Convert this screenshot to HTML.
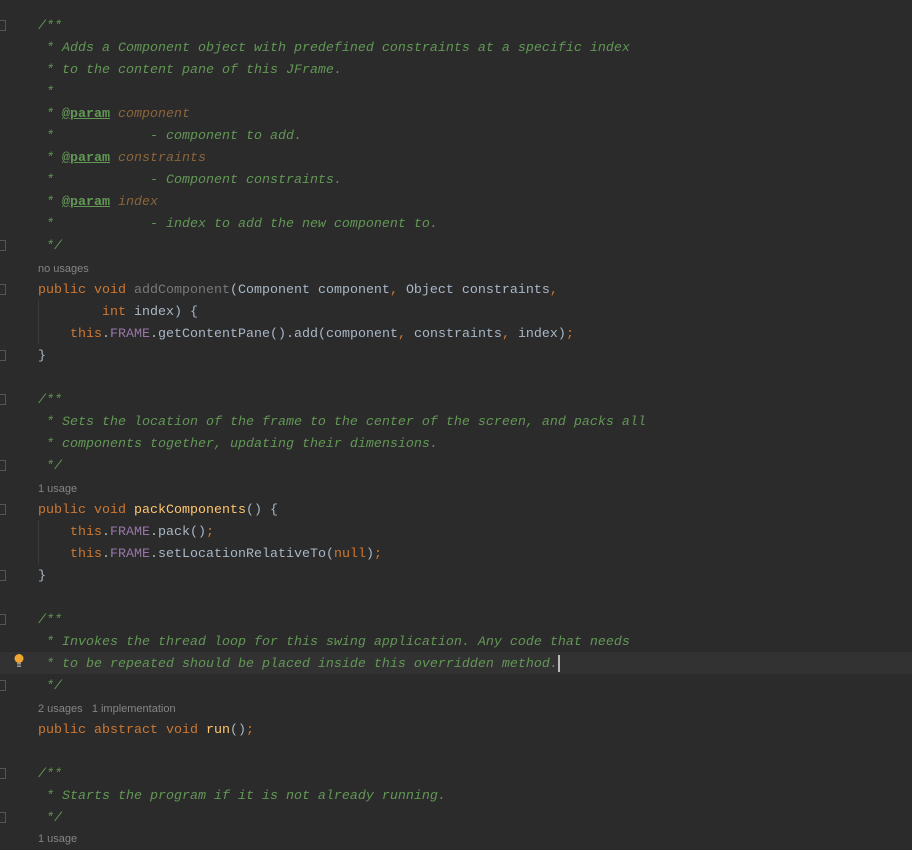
<!DOCTYPE html><html><head><style>
body{margin:0;width:912px;height:841px;background:#2b2b2b;overflow:hidden;position:relative;font-family:"Liberation Mono",monospace;font-size:13.33px}
.r{position:absolute;left:38px;height:22px;line-height:22px;white-space:pre;color:#a9b7c6;margin-top:2px}
.c{color:#629755;font-style:italic}
.t{color:#629755;font-style:normal;font-weight:bold;text-decoration:underline}
.p{color:#8a653b;font-style:italic}
.k{color:#cc7832}
.f{color:#9876aa}
.m{color:#ffc66d}
.u{color:#787878}
.h{position:absolute;left:38px;height:22px;line-height:22px;font-family:"Liberation Sans",sans-serif;font-size:11px;color:#858585;white-space:pre;margin-top:1px}
.fold{position:absolute;left:0;width:5px;height:9px;border:1px solid #555;border-left:none}
.g{position:absolute;left:38px;width:1px;background:#3a3a3a}
</style></head><body>
<div style="position:absolute;left:0;top:652px;width:912px;height:22px;background:#323232"></div>
<div class="g" style="top:300px;height:44px"></div>
<div class="g" style="top:520px;height:44px"></div>
<div class="fold" style="top:20px"></div><div class="fold" style="top:240px"></div>
<div class="fold" style="top:284px"></div><div class="fold" style="top:350px"></div>
<div class="fold" style="top:394px"></div><div class="fold" style="top:460px"></div>
<div class="fold" style="top:504px"></div><div class="fold" style="top:570px"></div>
<div class="fold" style="top:614px"></div><div class="fold" style="top:680px"></div>
<div class="fold" style="top:768px"></div><div class="fold" style="top:812px"></div>
<div class="r c" style="top:14px">/**</div>
<div class="r c" style="top:36px"> * Adds a Component object with predefined constraints at a specific index</div>
<div class="r c" style="top:58px"> * to the content pane of this JFrame.</div>
<div class="r c" style="top:80px"> *</div>
<div class="r c" style="top:102px"> * <span class="t">@param</span> <span class="p">component</span></div>
<div class="r c" style="top:124px"> *            - component to add.</div>
<div class="r c" style="top:146px"> * <span class="t">@param</span> <span class="p">constraints</span></div>
<div class="r c" style="top:168px"> *            - Component constraints.</div>
<div class="r c" style="top:190px"> * <span class="t">@param</span> <span class="p">index</span></div>
<div class="r c" style="top:212px"> *            - index to add the new component to.</div>
<div class="r c" style="top:234px"> */</div>
<div class="h" style="top:257px">no usages</div>
<div class="r" style="top:278px"><span class="k">public void </span><span class="u">addComponent</span>(Component component<span class="k">, </span>Object constraints<span class="k">,</span></div>
<div class="r" style="top:300px">        <span class="k">int </span>index) {</div>
<div class="r" style="top:322px">    <span class="k">this</span>.<span class="f">FRAME</span>.getContentPane().add(component<span class="k">, </span>constraints<span class="k">, </span>index)<span class="k">;</span></div>
<div class="r" style="top:344px">}</div>
<div class="r c" style="top:388px">/**</div>
<div class="r c" style="top:410px"> * Sets the location of the frame to the center of the screen, and packs all</div>
<div class="r c" style="top:432px"> * components together, updating their dimensions.</div>
<div class="r c" style="top:454px"> */</div>
<div class="h" style="top:477px">1 usage</div>
<div class="r" style="top:498px"><span class="k">public void </span><span class="m">packComponents</span>() {</div>
<div class="r" style="top:520px">    <span class="k">this</span>.<span class="f">FRAME</span>.pack()<span class="k">;</span></div>
<div class="r" style="top:542px">    <span class="k">this</span>.<span class="f">FRAME</span>.setLocationRelativeTo(<span class="k">null</span>)<span class="k">;</span></div>
<div class="r" style="top:564px">}</div>
<div class="r c" style="top:608px">/**</div>
<div class="r c" style="top:630px"> * Invokes the thread loop for this swing application. Any code that needs</div>
<div class="r c" style="top:652px"> * to be repeated should be placed inside this overridden method.<span style="display:inline-block;width:2px;height:17px;background:#bbb;vertical-align:middle"></span></div>
<svg style="position:absolute;left:13px;top:653px" width="12" height="16"><circle cx="6" cy="5.5" r="4.5" fill="#f0a732"/><rect x="4" y="10" width="4" height="1.5" fill="#999"/><rect x="4" y="12.5" width="4" height="1.5" fill="#999"/></svg>
<div class="r c" style="top:674px"> */</div>
<div class="h" style="top:697px">2 usages   1 implementation</div>
<div class="r" style="top:718px"><span class="k">public abstract void </span><span class="m">run</span>()<span class="k">;</span></div>
<div class="r c" style="top:762px">/**</div>
<div class="r c" style="top:784px"> * Starts the program if it is not already running.</div>
<div class="r c" style="top:806px"> */</div>
<div class="h" style="top:827px">1 usage</div>
</body></html>
